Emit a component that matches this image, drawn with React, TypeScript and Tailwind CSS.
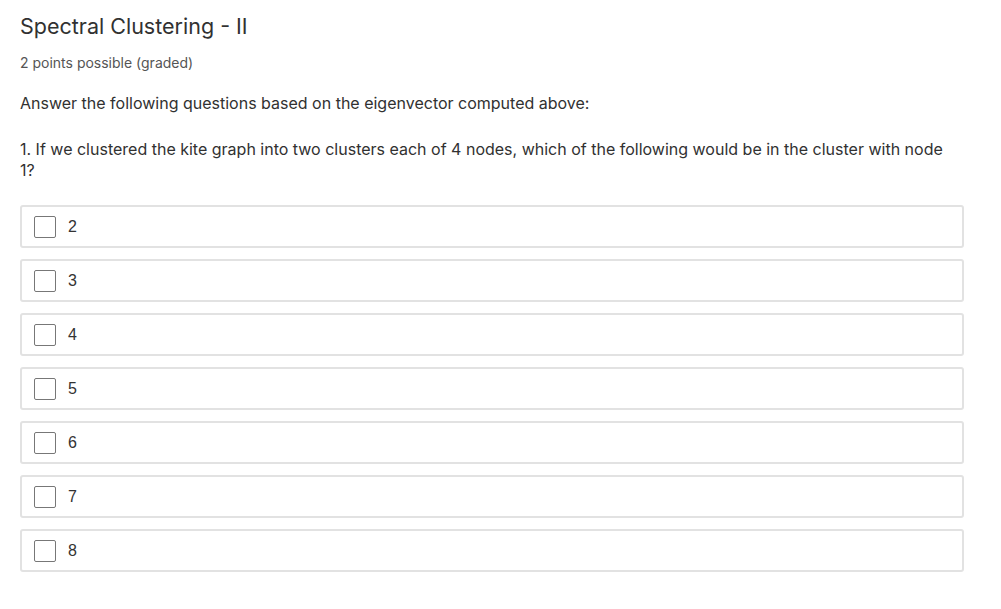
const options = ['2', '3', '4', '5', '6', '7', '8'];

export default function App() {
    return (
        <div className="min-h-[609px] w-full bg-white px-5 pt-[11px] font-['Inter','Liberation_Sans',sans-serif] text-[#313131]">
            <h2 className="text-[21.5px] font-normal leading-[30px] text-[#313131]">
                Spectral Clustering - II
            </h2>
            <p className="mt-[12px] text-[14px] leading-[20px] text-[#555]">
                2 points possible (graded)
            </p>
            <p className="mt-[20px] text-[16px] leading-[21px]">
                Answer the following questions based on the eigenvector computed above:
            </p>
            <p className="mt-[25px] w-[935px] text-[16px] leading-[21px]">
                1. If we clustered the kite graph into two clusters each of 4 nodes, which of the following would be in the cluster with node 1?
            </p>
            <div className="mt-[24px] flex w-[944px] flex-col gap-[11px]">
                {options.map((o) => (
                    <label
                        key={o}
                        className="flex h-[43px] items-center gap-[12px] rounded-[3px] border-2 border-[#e2e2e2] pl-[12px]"
                    >
                        <span className="h-[22px] w-[22px] rounded-[2px] border border-[#777]" />
                        <span className="font-['Liberation_Sans',Arial,sans-serif] text-[16px] text-[#333]">
                            {o}
                        </span>
                    </label>
                ))}
            </div>
        </div>
    );
}
